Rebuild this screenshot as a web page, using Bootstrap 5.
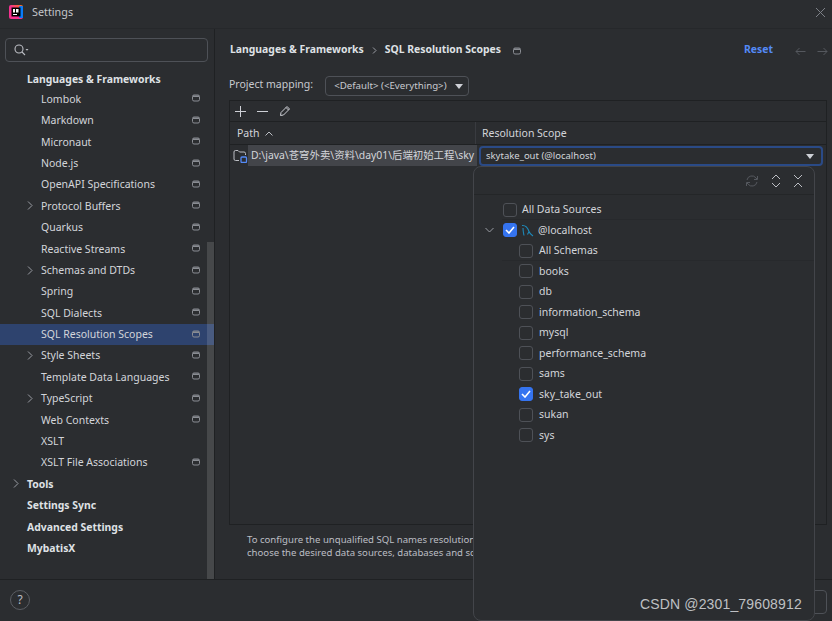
<!doctype html>
<html lang="en"><head><meta charset="utf-8"><title>Settings</title>
<link rel="stylesheet" href="https://cdn.jsdelivr.net/npm/bootstrap@5.3.0/dist/css/bootstrap.min.css">
<style>
html,body{height:100%;margin:0}
body{background:#2b2d30;color:#d3d5da;font:10.5px/1.2 "Noto Sans","Noto Sans CJK SC",sans-serif;overflow:hidden}
.shell{width:832px;height:621px;position:relative;overflow:hidden}
.titlebar{height:29px;padding:0 6px 3px 9px;border-bottom:1px solid #26282b;gap:8px}
.titlebar span{font-size:10.8px;color:#c4c6cb}
.midrow{height:551px;border-bottom:1px solid #1f2123}
.sidepane{width:214px;flex:none;position:relative;overflow:hidden}
.searchbox{height:24px;margin:9px 6px 5px 5px;border:1px solid #4e5157;border-radius:4px;padding-left:8px}
.tree{margin:0;padding:0;list-style:none}
.tree li{height:21.4px;display:flex;align-items:center;position:relative;white-space:nowrap}
.tree li.firstrow{padding-top:4px}
.lvl1{padding-left:27px;font-weight:700;font-size:10.4px;color:#dfe1e5}
.lvl2{padding-left:41px}
.tree li.picked{background:#2e436e}
.tw{position:absolute;left:27px;top:6px}
.lvl1 .tw{left:13px}
.dbm{position:absolute;left:192px;top:6px}
.vbar{position:absolute;right:0;top:213px;bottom:0;width:7px;background:rgba(255,255,255,.13)}
.contentpane{padding:0 5px 0 15px;min-width:0;border-left:1px solid #1f2123}
.crumbs{height:40px;padding-top:14px;font-weight:700;font-size:10.4px;color:#dfe1e5;gap:8px}
.crumbgap{margin-left:0}
.crumbicon{margin-left:4px}
.resetlink{margin-left:auto;color:#548af7;text-decoration:none;margin-right:14px}
.navarrows{gap:11px;margin-right:-1px}
.mapline{height:31px;gap:12px;color:#c8cacf;margin-left:-1px}
.maplabel{padding-top:9px}
.combo1{width:144px;height:20px;margin-top:7px;border:1px solid #4e5157;border-radius:4px;font-size:9.7px;padding:0 5px 0 8px;white-space:nowrap}
.tri{width:0;height:0;border-left:4.5px solid transparent;border-right:4.5px solid transparent;border-top:5px solid #ced0d6;margin-left:auto}
.scopepanel{height:425px;border:1px solid #1f2123;margin-left:-1px}
.tooling{height:21px;padding-left:5px;gap:7px;border-bottom:1px solid #1f2123}
.headrow{height:23px;border-bottom:1px solid #1f2123}
.hcell1{width:246px;padding-left:7px;border-right:1px solid #393b40;height:100%;gap:5px}
.hcell2{padding-left:6px}
.datarow{height:21px}
.foldcell{width:18px;padding-left:3px}
.pathcell{width:229px;height:100%;background:#43454a;padding-left:3px;white-space:nowrap;overflow:hidden;font-size:10.4px;color:#d3d5da}
.combo2{flex:1;margin:1px 3px 0 2px;height:20px;background:#2b2d30;border:2px solid #2a4a86;border-radius:4px;padding:0 7px 0 5px;font-size:9.5px}
.hintline{padding:8px 0 0 17px;line-height:13px;white-space:nowrap;font-size:9.6px;color:#bcbec4}
.footbar{height:40px;padding-left:10px}
.helpdot{width:20px;height:20px;border:1px solid #5a5d63;border-radius:50%;font-size:12px;color:#bcbec4}
.ghostbtn{position:absolute;left:780px;top:590px;width:47px;height:24px;border:1px solid #4e5157;border-radius:4px}
.popup{position:absolute;left:473px;top:166px;width:342px;height:455px;background:#2b2d30;border:1px solid #43454a;border-radius:8px}
.poptools{height:28px;justify-content:flex-end;gap:12px;padding-right:11px;border-bottom:1px solid #242628}
.popspacer{height:4.5px}
.scopeitem{height:20.5px;position:relative;white-space:nowrap}
.ck{width:14px;height:14px;border:1px solid #4e5157;border-radius:3px;flex:none;display:flex;align-items:center;justify-content:center}
.ck.on{background:#3574f0;border-color:#3574f0}
.depth0{padding-left:29px;gap:5px}
.depth1{padding-left:29px;gap:4px}
.depth2{padding-left:45px;gap:6px}
.rule::after{content:"";position:absolute;left:28px;right:0;bottom:0;border-bottom:1px solid #27292c}
.twist{position:absolute;left:11px;top:7px}
.stamp{position:absolute;left:640px;top:596px;font:14px/16px "Liberation Sans",sans-serif;letter-spacing:.15px;color:#bfc0c3;white-space:nowrap}
</style></head><body>
<div class="shell d-flex flex-column">
 <div class="titlebar d-flex align-items-center">
  <svg width="15" height="15" viewBox="0 0 15 15"><defs><linearGradient id="lg" x1="0" y1="1" x2="1" y2="0"><stop offset="0" stop-color="#f5318f"/><stop offset=".5" stop-color="#f5318f"/><stop offset="1" stop-color="#f97a12"/></linearGradient></defs><rect x="0" y="0" width="14" height="14" rx="2" fill="url(#lg)"/><rect x="10" y="1" width="4" height="12" rx="1" fill="#087cfa"/><rect x="2.500" y="2.500" width="9" height="9" fill="#000"/><rect x="4" y="9" width="4" height="1" fill="#fff"/><rect x="4" y="4" width="2" height="3.500" fill="#fff"/><rect x="7" y="4" width="2.500" height="3.500" fill="#fff"/></svg>
  <span>Settings</span>
  <svg class="ms-auto" width="11" height="11" viewBox="0 0 11 11"><path d="M1 1l9 9M10 1l-9 9" stroke="#7d8087" fill="none"/></svg>
 </div>
 <div class="midrow d-flex">
  <div class="sidepane">
   <div class="searchbox d-flex align-items-center"><svg width="16" height="12" viewBox="0 0 16 12"><circle cx="5" cy="5" r="4" fill="none" stroke="#bcbec4" stroke-width="1.100"/><path d="M8 8l3 3" stroke="#bcbec4" stroke-width="1.100"/><path d="M11.500 5h3l-1.500 1.800z" fill="#bcbec4"/></svg></div>
   <ul class="tree">
    <li class="lvl1 firstrow">Languages &amp; Frameworks</li>
    <li class="lvl2">Lombok<svg class="dbm" width="8" height="8"><use href="#pg"/></svg></li>
    <li class="lvl2">Markdown<svg class="dbm" width="8" height="8"><use href="#pg"/></svg></li>
    <li class="lvl2">Micronaut<svg class="dbm" width="8" height="8"><use href="#pg"/></svg></li>
    <li class="lvl2">Node.js<svg class="dbm" width="8" height="8"><use href="#pg"/></svg></li>
    <li class="lvl2">OpenAPI Specifications<svg class="dbm" width="8" height="8"><use href="#pg"/></svg></li>
    <li class="lvl2"><svg class="tw" width="6" height="9"><use href="#cr"/></svg>Protocol Buffers<svg class="dbm" width="8" height="8"><use href="#pg"/></svg></li>
    <li class="lvl2">Quarkus<svg class="dbm" width="8" height="8"><use href="#pg"/></svg></li>
    <li class="lvl2">Reactive Streams<svg class="dbm" width="8" height="8"><use href="#pg"/></svg></li>
    <li class="lvl2"><svg class="tw" width="6" height="9"><use href="#cr"/></svg>Schemas and DTDs<svg class="dbm" width="8" height="8"><use href="#pg"/></svg></li>
    <li class="lvl2">Spring<svg class="dbm" width="8" height="8"><use href="#pg"/></svg></li>
    <li class="lvl2">SQL Dialects<svg class="dbm" width="8" height="8"><use href="#pg"/></svg></li>
    <li class="lvl2 picked">SQL Resolution Scopes<svg class="dbm" width="8" height="8"><use href="#pg"/></svg></li>
    <li class="lvl2"><svg class="tw" width="6" height="9"><use href="#cr"/></svg>Style Sheets<svg class="dbm" width="8" height="8"><use href="#pg"/></svg></li>
    <li class="lvl2">Template Data Languages<svg class="dbm" width="8" height="8"><use href="#pg"/></svg></li>
    <li class="lvl2"><svg class="tw" width="6" height="9"><use href="#cr"/></svg>TypeScript<svg class="dbm" width="8" height="8"><use href="#pg"/></svg></li>
    <li class="lvl2">Web Contexts<svg class="dbm" width="8" height="8"><use href="#pg"/></svg></li>
    <li class="lvl2">XSLT</li>
    <li class="lvl2">XSLT File Associations<svg class="dbm" width="8" height="8"><use href="#pg"/></svg></li>
    <li class="lvl1"><svg class="tw" width="6" height="9"><use href="#cr"/></svg>Tools</li>
    <li class="lvl1">Settings Sync</li>
    <li class="lvl1">Advanced Settings</li>
    <li class="lvl1">MybatisX</li>
   </ul>
   <div class="vbar"></div>
  </div>
  <div class="contentpane flex-grow-1 d-flex flex-column">
   <div class="crumbs d-flex align-items-start">
    <span>Languages &amp; Frameworks</span><svg class="mt-1" width="5" height="7" viewBox="0 0 5 7"><path d="M1 .5l3 3-3 3" fill="none" stroke="#9a9da3"/></svg><span class="crumbgap">SQL Resolution Scopes</span><svg class="crumbicon mt-1" width="8" height="8"><use href="#pg"/></svg>
    <a class="resetlink" href="#">Reset</a>
    <span class="navarrows d-flex mt-1"><svg width="11" height="9" viewBox="0 0 11 9"><path d="M10.500 4.500H1M4.500 1L1 4.500 4.500 8" fill="none" stroke="#55585e"/></svg><svg width="11" height="9" viewBox="0 0 11 9"><path d="M.5 4.500H10M6.500 1L10 4.500 6.500 8" fill="none" stroke="#55585e"/></svg></span>
   </div>
   <div class="mapline d-flex align-items-start"><span class="maplabel">Project mapping:</span><div class="combo1 d-flex align-items-center">&lt;Default&gt; (&lt;Everything&gt;)<i class="tri"></i></div></div>
   <div class="scopepanel">
    <div class="tooling d-flex align-items-center">
     <svg width="11" height="11" viewBox="0 0 11 11"><path d="M5.500 0v11M0 5.500h11" stroke="#ced0d6"/></svg>
     <svg class="ms-1" width="11" height="11" viewBox="0 0 11 11"><path d="M0 5.500h11" stroke="#ced0d6"/></svg>
     <svg class="ms-1" width="12" height="12" viewBox="0 0 12 12"><path d="M1.500 10.500l.5-3 6-6 2.500 2.500-6 6zM7 2.500L9.500 5" fill="none" stroke="#ced0d6"/></svg>
    </div>
    <div class="headrow d-flex align-items-center">
     <div class="hcell1 d-flex align-items-center"><span>Path</span><svg width="8" height="5" viewBox="0 0 8 5"><path d="M.5 4.500L4 1l3.500 3.500" fill="none" stroke="#bcbec4"/></svg></div>
     <div class="hcell2">Resolution Scope</div>
    </div>
    <div class="datarow d-flex align-items-center">
     <div class="foldcell"><svg width="15" height="14" viewBox="0 0 15 14"><path d="M6 11.500H2.500a1.500 1.500 0 0 1-1.500-1.500V3a1.500 1.500 0 0 1 1.500-1.500H5l1.500 1.500H11a1.500 1.500 0 0 1 1.500 1.500V6" fill="none" stroke="#bcbec4"/><rect x="8" y="8" width="5.500" height="5.500" rx="1" fill="none" stroke="#548af7" stroke-width="1.300"/></svg></div>
     <div class="pathcell d-flex align-items-center">D:\java\苍穹外卖\资料\day01\后端初始工程\sky</div>
     <div class="combo2 d-flex align-items-center">skytake_out (@localhost)<i class="tri"></i></div>
    </div>
   </div>
   <div class="hintline">To configure the unqualified SQL names resolution<br>choose the desired data sources, databases and sch</div>
  </div>
 </div>
 <div class="footbar d-flex align-items-center"><div class="helpdot d-flex align-items-center justify-content-center">?</div></div>
 <div class="ghostbtn"></div>
 <div class="popup">
  <div class="poptools d-flex align-items-center">
   <svg width="14" height="14" viewBox="0 0 14 14"><path d="M2 6a5 5 0 0 1 9-2l1 1M12 8a5 5 0 0 1-9 2L2 9" fill="none" stroke="#55585e"/><path d="M12.500 2v3.500H9M1.500 12V8.500H5" fill="none" stroke="#55585e"/></svg>
   <svg width="10" height="14" viewBox="0 0 10 14"><path d="M1 5l4-4 4 4M1 9l4 4 4-4" fill="none" stroke="#bcbec4"/></svg>
   <svg width="10" height="14" viewBox="0 0 10 14"><path d="M1 1l4 4 4-4M1 13l4-4 4 4" fill="none" stroke="#bcbec4"/></svg>
  </div>
  <div class="popspacer"></div>
  <div class="scopeitem depth0 d-flex align-items-center rule"><span class="ck"></span>All Data Sources</div>
  <div class="scopeitem depth1 d-flex align-items-center"><svg class="twist" width="9" height="6" viewBox="0 0 9 6"><path d="M.5 1L4.500 5l4-4" fill="none" stroke="#9a9da3"/></svg><span class="ck on"><svg width="10" height="8" viewBox="0 0 10 8"><path d="M1 4l3 3 5-6" fill="none" stroke="#fff" stroke-width="1.600"/></svg></span><svg width="13" height="13" viewBox="0 0 13 13"><path d="M1 1.500c4-.5 6 3 7 6 .5 1.500 2 3 4 4.500M2 4c0 3 .5 5 1 7.500M8 7.500l-1.500 3" fill="none" stroke="#1e88b8" stroke-width="1.100"/></svg>@localhost</div>
  <div class="scopeitem depth2 d-flex align-items-center rule"><span class="ck"></span>All Schemas</div>
  <div class="scopeitem depth2 d-flex align-items-center"><span class="ck"></span>books</div>
  <div class="scopeitem depth2 d-flex align-items-center"><span class="ck"></span>db</div>
  <div class="scopeitem depth2 d-flex align-items-center"><span class="ck"></span>information_schema</div>
  <div class="scopeitem depth2 d-flex align-items-center"><span class="ck"></span>mysql</div>
  <div class="scopeitem depth2 d-flex align-items-center"><span class="ck"></span>performance_schema</div>
  <div class="scopeitem depth2 d-flex align-items-center"><span class="ck"></span>sams</div>
  <div class="scopeitem depth2 d-flex align-items-center"><span class="ck on"><svg width="10" height="8" viewBox="0 0 10 8"><path d="M1 4l3 3 5-6" fill="none" stroke="#fff" stroke-width="1.600"/></svg></span>sky_take_out</div>
  <div class="scopeitem depth2 d-flex align-items-center"><span class="ck"></span>sukan</div>
  <div class="scopeitem depth2 d-flex align-items-center"><span class="ck"></span>sys</div>
 </div>
 <div class="stamp">CSDN @2301_79608912</div>
 <svg width="0" height="0" class="d-block position-absolute"><defs>
  <symbol id="pg" viewBox="0 0 8 8"><rect x=".5" y="1" width="7" height="6" rx="1.500" fill="none" stroke="#8a8d93"/><rect x="1" y="1.500" width="6" height="1.500" fill="#8a8d93"/></symbol>
  <symbol id="cr" viewBox="0 0 6 9"><path d="M1 .5l4 4-4 4" fill="none" stroke="#9a9da3"/></symbol>
 </defs></svg>
</div>
<script src="https://cdn.jsdelivr.net/npm/bootstrap@5.3.0/dist/js/bootstrap.bundle.min.js"></script>
</body></html>
